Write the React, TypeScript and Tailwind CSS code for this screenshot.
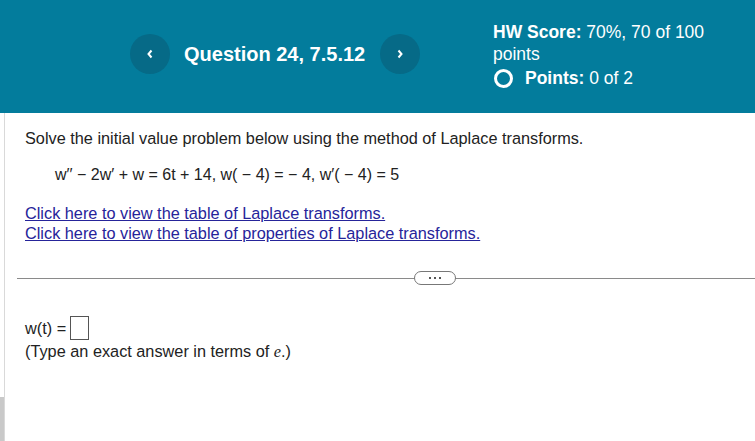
import React from "react";

export default function App() {
  return (
    <div className="w-[755px] h-[441px] overflow-hidden bg-white flex flex-col" style={{ fontFamily: '"Liberation Sans", Arial, sans-serif' }}>
      <div className="h-[113px] shrink-0 bg-[#037c9c] flex text-white">
        <div className="w-[493px] shrink-0 flex items-center pl-[130px] pb-[6px]">
          <div className="w-[40px] h-[40px] rounded-full bg-[#066a87] flex items-center justify-center">
            <svg width="8" height="10" viewBox="0 0 8 10"><path d="M5.5 1.5 L2.5 5 L5.5 8.5" stroke="white" strokeWidth="2" fill="none" /></svg>
          </div>
          <div className="ml-[14px] text-[20px] font-bold leading-none">Question 24, 7.5.12</div>
          <div className="ml-[15px] w-[40px] h-[40px] rounded-full bg-[#066a87] flex items-center justify-center">
            <svg width="8" height="10" viewBox="0 0 8 10"><path d="M2.5 1.5 L5.5 5 L2.5 8.5" stroke="white" strokeWidth="2" fill="none" /></svg>
          </div>
        </div>
        <div className="pt-[21px] text-[17.5px] leading-[22px] w-[230px]">
          <div><span className="font-bold">HW Score:</span> 70%, 70 of 100 points</div>
          <div className="flex items-center mt-[2px]">
            <div className="w-[19px] h-[19px] rounded-full border-[3px] border-white ml-[1px]" />
            <div className="ml-[12px]"><span className="font-bold">Points:</span> 0 of 2</div>
          </div>
        </div>
      </div>
      <div className="flex-1 flex">
        <div className="w-[5px] shrink-0 border-r border-[#d9d9d9] flex flex-col justify-end">
          <div className="h-[44px] bg-[#c9c9c9]" />
        </div>
        <div className="flex-1 pl-[20px] pt-[15px] text-[#222] text-[16.3px]">
          <div className="leading-[20px]">Solve the initial value problem below using the method of Laplace transforms.</div>
          <div className="pl-[30px] mt-[17px] leading-[20px] text-[16px]">w′′ − 2w′ + w = 6t + 14, w( − 4) = − 4, w′( − 4) = 5</div>
          <div className="mt-[18px] leading-[20px] text-[#26249a] underline">
            <div>Click here to view the table of Laplace transforms.</div>
            <div>Click here to view the table of properties of Laplace transforms.</div>
          </div>
          <div className="mt-[28px] ml-[-8px] relative h-[14px] flex items-center">
            <div className="w-full h-px bg-[#8a8a8a]" />
            <div className="absolute left-[397px] top-0 w-[42px] h-[14px] rounded-full border border-[#777] bg-white flex items-center justify-center gap-[3px]">
              <div className="w-[2px] h-[2px] bg-[#555]" />
              <div className="w-[2px] h-[2px] bg-[#555]" />
              <div className="w-[2px] h-[2px] bg-[#555]" />
            </div>
          </div>
          <div className="mt-[31px] flex items-center leading-[20px]">
            <span>w(t) =</span>
            <div className="ml-[4px] w-[19px] h-[24px] border border-[#555]" />
          </div>
          <div className="mt-[1px] leading-[20px]">(Type an exact answer in terms of <span className="italic" style={{ fontFamily: '"Liberation Serif", serif' }}>e</span>.)</div>
        </div>
      </div>
    </div>
  );
}
